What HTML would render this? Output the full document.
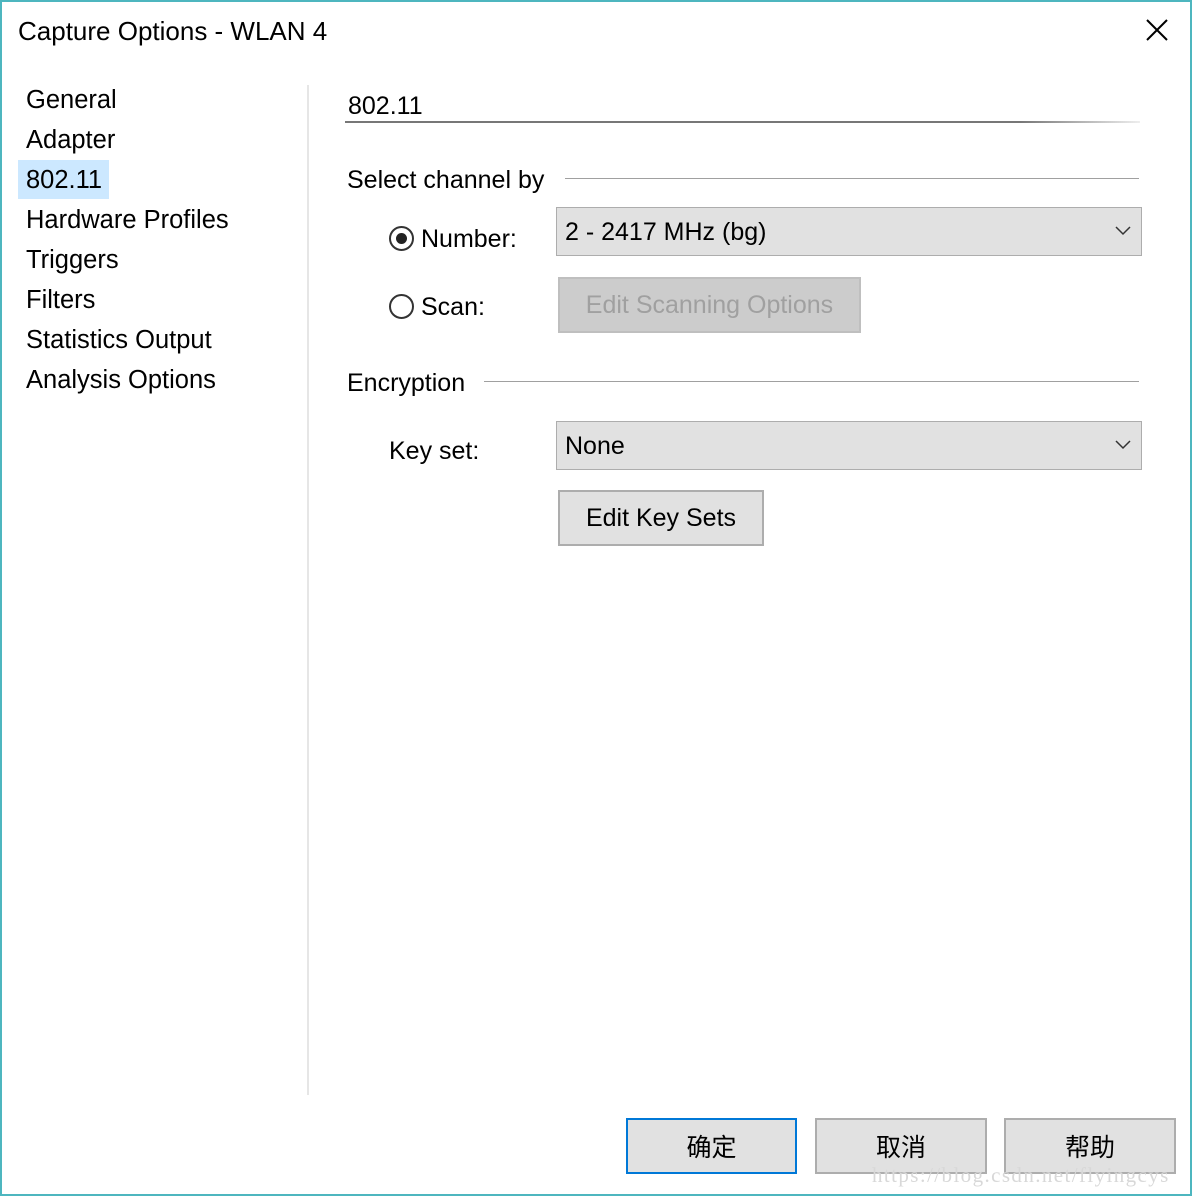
<!DOCTYPE html>
<html><head><meta charset="utf-8"><style>
*{margin:0;padding:0;box-sizing:border-box}
html,body{width:1192px;height:1196px;overflow:hidden;background:#fff}
body{position:relative;font-family:"Liberation Sans","Noto Sans CJK SC",sans-serif;color:#000}
.frame{position:absolute;left:0;top:0;width:1192px;height:1196px;border:2px solid #4db6bf;pointer-events:none}
.a{position:absolute;white-space:nowrap}
.t{font-size:25px}
.nav{font-size:25.5px;left:26px}
.combo{position:absolute;background:#e1e1e1;border:1px solid #adadad;height:49px;left:556px;width:586px;font-size:25px;padding:10px 8px}
.chev{position:absolute;right:10px;top:18px}
.btn{position:absolute;background:#e1e1e1;border:2px solid #adadad;font-size:25px;display:flex;align-items:center;justify-content:center}
.radio{position:absolute;width:25px;height:25px;border:2px solid #333;border-radius:50%}
.line{position:absolute;height:1px;background:#a0a0a0}
</style></head><body>
<div class="a" style="left:18px;top:16px;font-size:26px">Capture Options - WLAN 4</div>
<svg class="a" style="left:1146px;top:19px" width="22" height="22"><path d="M1 1L21 21M21 1L1 21" stroke="#000" stroke-width="2"/></svg>

<div class="a" style="left:18px;top:160px;width:91px;height:39px;background:#cce8ff"></div>
<div class="a nav" style="top:86px">General</div>
<div class="a nav" style="top:126px">Adapter</div>
<div class="a nav" style="top:166px">802.11</div>
<div class="a nav" style="top:206px">Hardware Profiles</div>
<div class="a nav" style="top:246px">Triggers</div>
<div class="a nav" style="top:286px">Filters</div>
<div class="a nav" style="top:326px">Statistics Output</div>
<div class="a nav" style="top:366px">Analysis Options</div>

<div class="a" style="left:307px;top:85px;width:2px;height:1010px;background:#e6e6e6"></div>

<div class="a t" style="left:348px;top:92px">802.11</div>
<div class="a" style="left:345px;top:121px;width:795px;height:2px;background:linear-gradient(to right,#777 85%,#eee)"></div>

<div class="a t" style="left:347px;top:166px">Select channel by</div>
<div class="line" style="left:565px;top:178px;width:574px"></div>

<div class="radio" style="left:389px;top:226px"><div style="position:absolute;left:5px;top:5px;width:11px;height:11px;border-radius:50%;background:#222"></div></div>
<div class="a t" style="left:421px;top:225px">Number:</div>
<div class="combo" style="top:207px">2 - 2417 MHz (bg)<svg class="chev" width="16" height="10"><path d="M1 1L8 8L15 1" stroke="#333" stroke-width="1.5" fill="none"/></svg></div>

<div class="radio" style="left:389px;top:294px"></div>
<div class="a t" style="left:421px;top:293px">Scan:</div>
<div class="btn" style="left:558px;top:277px;width:303px;height:56px;background:#cccccc;border-color:#bfbfbf;color:#a0a0a0">Edit Scanning Options</div>

<div class="a t" style="left:347px;top:369px">Encryption</div>
<div class="line" style="left:484px;top:381px;width:655px"></div>

<div class="a t" style="left:389px;top:437px">Key set:</div>
<div class="combo" style="top:421px">None<svg class="chev" width="16" height="10"><path d="M1 1L8 8L15 1" stroke="#333" stroke-width="1.5" fill="none"/></svg></div>
<div class="btn" style="left:558px;top:490px;width:206px;height:56px">Edit Key Sets</div>

<div class="btn" style="left:626px;top:1118px;width:171px;height:56px;border-color:#0078d7">确定</div>
<div class="btn" style="left:815px;top:1118px;width:172px;height:56px">取消</div>
<div class="btn" style="left:1004px;top:1118px;width:172px;height:56px">帮助</div>
<div class="a" style="left:872px;top:1163px;font-family:'Liberation Serif',serif;font-size:21px;letter-spacing:1.4px;color:#d8d8d8">https://blog.csdn.net/flyingcys</div>
<div class="frame"></div>
</body></html>
